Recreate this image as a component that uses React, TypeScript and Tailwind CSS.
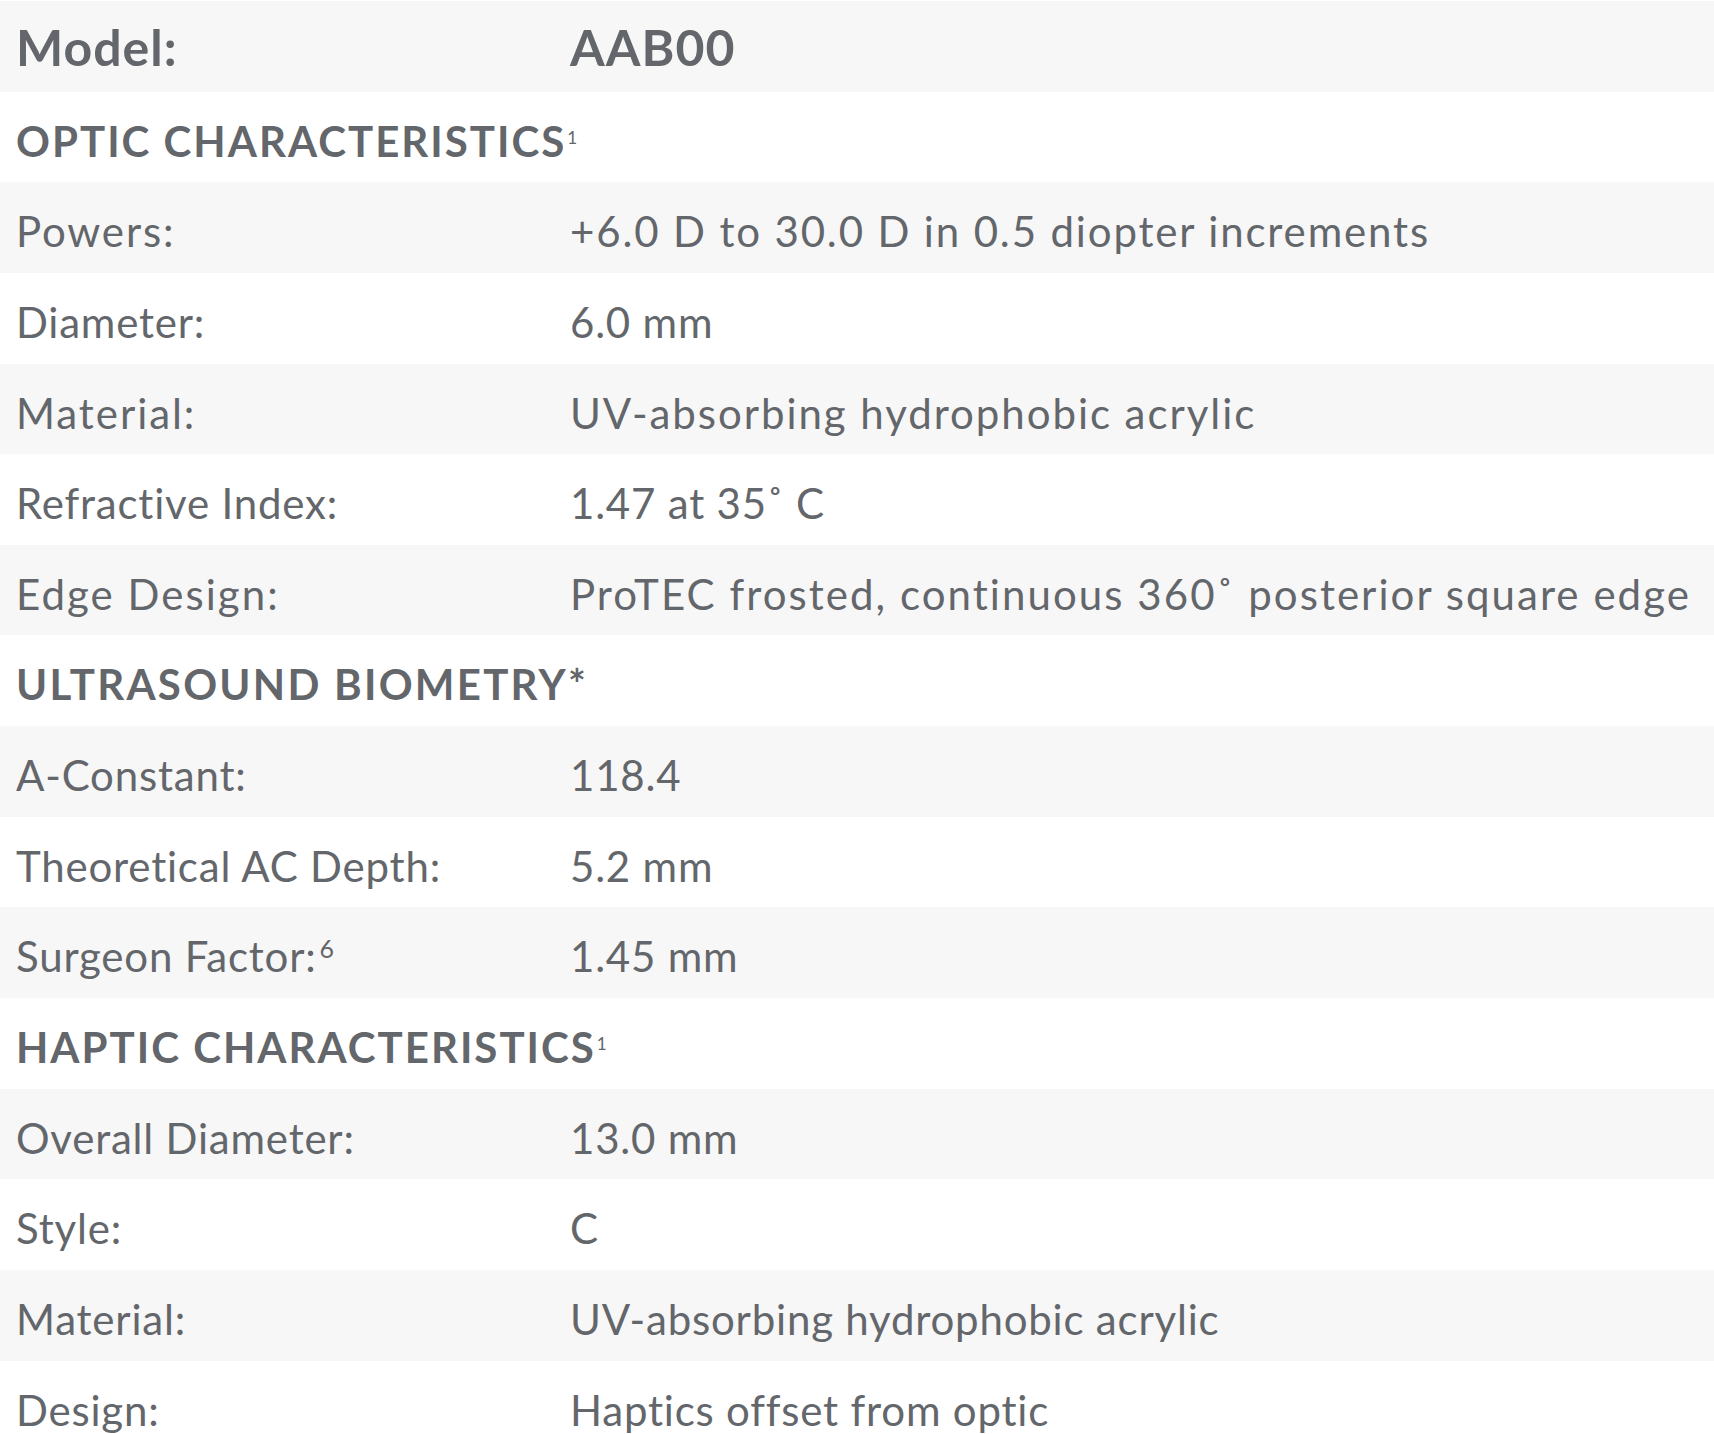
import React from 'react';

type Row =
  | { kind: 'head'; title: string; mark: string; track: string }
  | { kind: 'spec'; label: string; value: string; note?: string; track?: string };

// some rows of the source page are set with looser tracking than others
const rows: Row[] = [
  { kind: 'head', title: 'OPTIC CHARACTERISTICS', mark: '1', track: 'tracking-[2px]' },
  { kind: 'spec', label: 'Powers:', value: '+6.0 D to 30.0 D in 0.5 diopter increments', track: 'tracking-[1.85px]' },
  { kind: 'spec', label: 'Diameter:', value: '6.0 mm' },
  { kind: 'spec', label: 'Material:', value: 'UV-absorbing hydrophobic acrylic', track: 'tracking-[1.95px]' },
  { kind: 'spec', label: 'Refractive Index:', value: '1.47 at 35˚ C' },
  { kind: 'spec', label: 'Edge Design:', value: 'ProTEC frosted, continuous 360˚ posterior square edge', track: 'tracking-[2.05px]' },
  { kind: 'head', title: 'ULTRASOUND BIOMETRY*', mark: '', track: 'tracking-[2.25px]' },
  { kind: 'spec', label: 'A-Constant:', value: '118.4' },
  { kind: 'spec', label: 'Theoretical AC Depth:', value: '5.2 mm' },
  { kind: 'spec', label: 'Surgeon Factor:', value: '1.45 mm', note: '6' },
  { kind: 'head', title: 'HAPTIC CHARACTERISTICS', mark: '1', track: 'tracking-[2px]' },
  { kind: 'spec', label: 'Overall Diameter:', value: '13.0 mm' },
  { kind: 'spec', label: 'Style:', value: 'C' },
  { kind: 'spec', label: 'Material:', value: 'UV-absorbing hydrophobic acrylic' },
  { kind: 'spec', label: 'Design:', value: 'Haptics offset from optic' },
];

export default function App() {
  return (
    <div className="min-h-[1434px] bg-white pt-px text-[#63666a] font-['Lato',_'Open_Sans',_sans-serif]">
      {/* model row */}
      <div className="grid grid-cols-[554px_1fr] items-baseline h-[90.65px] pt-[16px] bg-[#f7f7f7] text-[50px] leading-[60px] font-bold tracking-[1px]">
        <div className="pl-[16px]">Model:</div>
        <div className="pl-[16px]">AAB00</div>
      </div>

      {rows.map((row, i) => {
        const bg = i % 2 === 1 ? 'bg-[#f7f7f7]' : 'bg-white';
        if (row.kind === 'head') {
          return (
            <div key={i} className={`h-[90.65px] pt-[24px] pl-[16px] text-[42px] leading-[50px] font-bold whitespace-nowrap ${row.track} ${bg}`}>
              {row.title}
              {row.mark && (
                <sup className="text-[17px] font-normal tracking-normal relative -top-[13px] ml-[1px] align-baseline">{row.mark}</sup>
              )}
            </div>
          );
        }
        return (
          <div
            key={i}
            className={`grid grid-cols-[554px_1fr] items-baseline h-[90.65px] pt-[24px] text-[42px] leading-[50px] ${row.track ?? 'tracking-[0.8px]'} ${bg}`}
          >
            <div className="pl-[16px] whitespace-nowrap">
              {row.label}
              {row.note && (
                <sup className="text-[25px] tracking-normal relative -top-[14px] ml-[3px] align-baseline">{row.note}</sup>
              )}
            </div>
            <div className="pl-[16px] whitespace-nowrap">{row.value}</div>
          </div>
        );
      })}
    </div>
  );
}
